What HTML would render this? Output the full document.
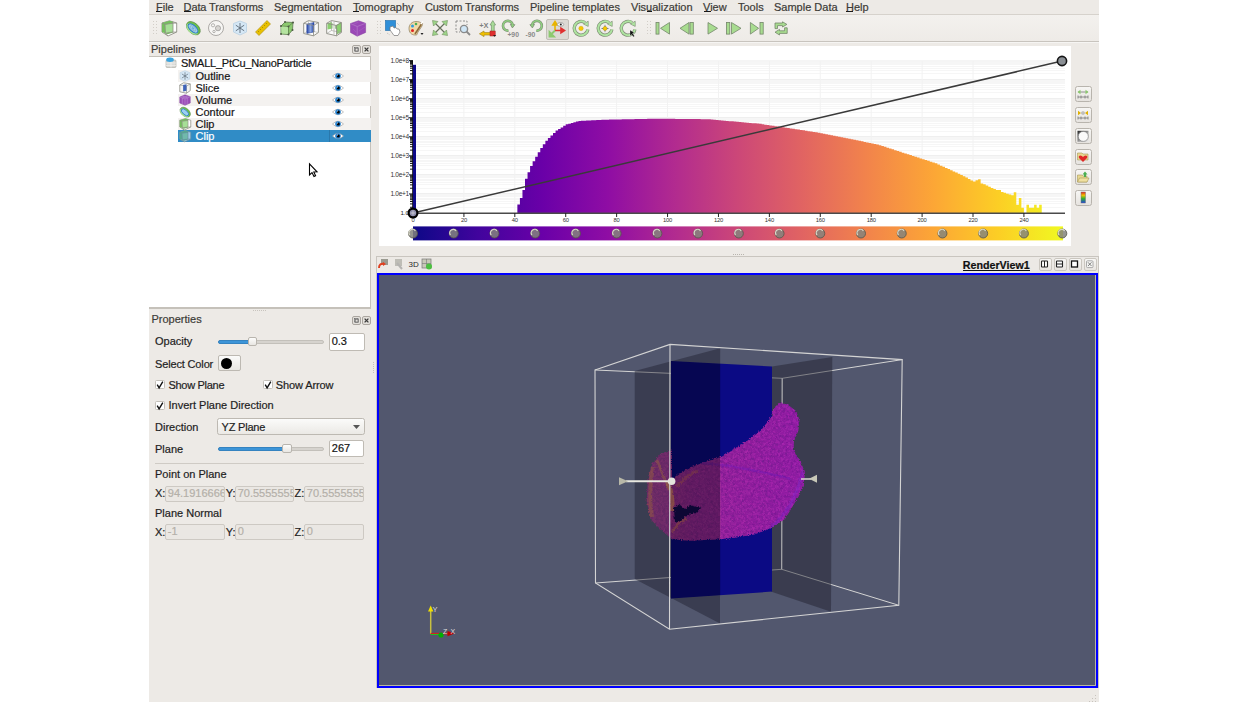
<!DOCTYPE html>
<html><head><meta charset="utf-8">
<style>
*{margin:0;padding:0;box-sizing:border-box}
html,body{width:1248px;height:702px;overflow:hidden;background:#fff;font-family:"Liberation Sans",sans-serif;font-size:11px;color:#3c3b37}
.a{position:absolute}
.t{white-space:nowrap;line-height:13px;-webkit-text-stroke:0.2px currentColor}
svg{position:absolute;overflow:visible}
</style></head>
<body>

<div class="a" style="left:149px;top:0px;width:950px;height:702px;background:#edeae6"></div>
<div class="a" style="left:149px;top:14px;width:950px;height:1px;background:#d6d2cc"></div>
<div class="a t" style="left:156px;top:0.5px;font-size:11px;color:#3c3b37">File</div>
<div class="a t" style="left:183.6px;top:0.5px;font-size:11px;color:#3c3b37;letter-spacing:-0.12px">Data Transforms</div>
<div class="a t" style="left:274px;top:0.5px;font-size:11px;color:#3c3b37">Segmentation</div>
<div class="a t" style="left:353px;top:0.5px;font-size:11px;color:#3c3b37">Tomography</div>
<div class="a t" style="left:425px;top:0.5px;font-size:11px;color:#3c3b37;letter-spacing:-0.12px">Custom Transforms</div>
<div class="a t" style="left:530px;top:0.5px;font-size:11px;color:#3c3b37">Pipeline templates</div>
<div class="a t" style="left:631px;top:0.5px;font-size:11px;color:#3c3b37">Visualization</div>
<div class="a t" style="left:703px;top:0.5px;font-size:11px;color:#3c3b37">View</div>
<div class="a t" style="left:738px;top:0.5px;font-size:11px;color:#3c3b37">Tools</div>
<div class="a t" style="left:774px;top:0.5px;font-size:11px;color:#3c3b37">Sample Data</div>
<div class="a t" style="left:846px;top:0.5px;font-size:11px;color:#3c3b37">Help</div>
<div class="a" style="left:156px;top:10.7px;width:6px;height:1.6px;background:#1a1a1a"></div>
<div class="a" style="left:184px;top:10.7px;width:7px;height:1.6px;background:#1a1a1a"></div>
<div class="a" style="left:352.6px;top:10.7px;width:6px;height:1.6px;background:#1a1a1a"></div>
<div class="a" style="left:703.5px;top:10.7px;width:7px;height:1.6px;background:#1a1a1a"></div>
<div class="a" style="left:846px;top:10.7px;width:7px;height:1.6px;background:#1a1a1a"></div>
<div class="a" style="left:646.6px;top:10.7px;width:5px;height:1.6px;background:#1a1a1a"></div>
<div class="a" style="left:149px;top:15px;width:950px;height:26px;background:linear-gradient(#f3f1ee,#eeebe7)"></div>
<div class="a" style="left:149px;top:41px;width:950px;height:1px;background:#c8c4be"></div>
<div class="a" style="left:149px;top:42px;width:950px;height:1px;background:#f6f5f3"></div>
<div class="a" style="left:153px;top:21px;width:1px;height:1px;background:#d2cec8"></div>
<div class="a" style="left:156px;top:21px;width:1px;height:1px;background:#d2cec8"></div>
<div class="a" style="left:153px;top:24px;width:1px;height:1px;background:#d2cec8"></div>
<div class="a" style="left:156px;top:24px;width:1px;height:1px;background:#d2cec8"></div>
<div class="a" style="left:153px;top:27px;width:1px;height:1px;background:#d2cec8"></div>
<div class="a" style="left:156px;top:27px;width:1px;height:1px;background:#d2cec8"></div>
<div class="a" style="left:153px;top:30px;width:1px;height:1px;background:#d2cec8"></div>
<div class="a" style="left:156px;top:30px;width:1px;height:1px;background:#d2cec8"></div>
<div class="a" style="left:153px;top:33px;width:1px;height:1px;background:#d2cec8"></div>
<div class="a" style="left:156px;top:33px;width:1px;height:1px;background:#d2cec8"></div>
<div class="a" style="left:376.5px;top:21px;width:1px;height:1px;background:#d2cec8"></div>
<div class="a" style="left:379.5px;top:21px;width:1px;height:1px;background:#d2cec8"></div>
<div class="a" style="left:376.5px;top:24px;width:1px;height:1px;background:#d2cec8"></div>
<div class="a" style="left:379.5px;top:24px;width:1px;height:1px;background:#d2cec8"></div>
<div class="a" style="left:376.5px;top:27px;width:1px;height:1px;background:#d2cec8"></div>
<div class="a" style="left:379.5px;top:27px;width:1px;height:1px;background:#d2cec8"></div>
<div class="a" style="left:376.5px;top:30px;width:1px;height:1px;background:#d2cec8"></div>
<div class="a" style="left:379.5px;top:30px;width:1px;height:1px;background:#d2cec8"></div>
<div class="a" style="left:376.5px;top:33px;width:1px;height:1px;background:#d2cec8"></div>
<div class="a" style="left:379.5px;top:33px;width:1px;height:1px;background:#d2cec8"></div>
<div class="a" style="left:647px;top:21px;width:1px;height:1px;background:#d2cec8"></div>
<div class="a" style="left:650px;top:21px;width:1px;height:1px;background:#d2cec8"></div>
<div class="a" style="left:647px;top:24px;width:1px;height:1px;background:#d2cec8"></div>
<div class="a" style="left:650px;top:24px;width:1px;height:1px;background:#d2cec8"></div>
<div class="a" style="left:647px;top:27px;width:1px;height:1px;background:#d2cec8"></div>
<div class="a" style="left:650px;top:27px;width:1px;height:1px;background:#d2cec8"></div>
<div class="a" style="left:647px;top:30px;width:1px;height:1px;background:#d2cec8"></div>
<div class="a" style="left:650px;top:30px;width:1px;height:1px;background:#d2cec8"></div>
<div class="a" style="left:647px;top:33px;width:1px;height:1px;background:#d2cec8"></div>
<div class="a" style="left:650px;top:33px;width:1px;height:1px;background:#d2cec8"></div>
<svg style="left:161.3px;top:20.0px" width="16" height="16" viewBox="0 0 16 16"><path d="M1 3 L8.5 0.8 L15.7 3 L15.7 12 L7 16 L1 12 Z" fill="#fff" stroke="#8f8f84" stroke-width="0.9"/><path d="M1 3 L8.5 0.8 L12 1.8 L12 12.5 L6.5 14.3 L1 12 Z" fill="#74bf5e"/><path d="M4 4.4 L12 3.2 L12 12 L4.5 13.2 Z" fill="#a6df96"/><path d="M1 3 L4 4.4 L12 3.2 M4 4.4 L4.5 13.2 L12 12 M12 1.8 V12.2 L15.7 12 M12 3.2 L15.7 3 M4.5 13.2 L7 16" stroke="#8f8f84" stroke-width="0.8" fill="none"/></svg>
<svg style="left:184.8px;top:20.0px" width="16" height="16" viewBox="0 0 16 16"><ellipse cx="8.3" cy="8.2" rx="5.2" ry="8" transform="rotate(-48 8.3 8.2)" fill="#6cc444" stroke="#5c8a4a" stroke-width="0.8"/><ellipse cx="7.2" cy="9" rx="4.2" ry="7" transform="rotate(-48 7.2 9)" fill="#a6e090"/><ellipse cx="8" cy="8.4" rx="3" ry="6" transform="rotate(-48 8 8.4)" fill="#9ccff4" stroke="#2c7cc0" stroke-width="1.1"/><ellipse cx="8" cy="8.4" rx="1.6" ry="3.6" transform="rotate(-48 8 8.4)" fill="none" stroke="#8aa0b0" stroke-width="0.6"/><ellipse cx="8" cy="8.4" rx="0.6" ry="1.4" transform="rotate(-48 8 8.4)" fill="#5aa0d8"/></svg>
<svg style="left:208.0px;top:20.0px" width="16" height="16" viewBox="0 0 16 16"><circle cx="8" cy="8" r="7.5" fill="#f7f6f4" stroke="#8c8a86" stroke-width="0.7"/><circle cx="5" cy="5.3" r="1.6" fill="none" stroke="#8c8a86" stroke-width="0.6"/><circle cx="10" cy="8.2" r="2.6" fill="#d7d5d2" stroke="#8c8a86" stroke-width="0.6"/><circle cx="6" cy="11.5" r="1.2" fill="none" stroke="#8c8a86" stroke-width="0.6"/></svg>
<svg style="left:231.5px;top:20.0px" width="16" height="16" viewBox="0 0 16 16"><path d="M1.5 3.5 L8 1 L14.5 3.5 L14.5 12 L8 15 L1.5 12 Z" fill="#d6e8f6" stroke="#b8cfe2" stroke-width="0.8"/><path d="M8 3 V13 M3.8 5.2 L12.2 10.8 M12.2 5.2 L3.8 10.8" stroke="#5c6a76" stroke-width="0.9"/></svg>
<svg style="left:255.0px;top:20.0px" width="16" height="16" viewBox="0 0 16 16"><path d="M0.5 12 L12 0.5 L15.5 4 L4 15.5 Z" fill="#e8c000" stroke="#a88a10" stroke-width="0.6"/><path d="M3 11 L4 12 M5 9 L6 10 M7 7 L8 8 M9 5 L10 6 M11 3 L12 4" stroke="#8a6e00" stroke-width="0.6"/></svg>
<svg style="left:278.7px;top:20.0px" width="16" height="16" viewBox="0 0 16 16"><path d="M2 6 L6 2 L14 2.5 L13.5 10 L9.5 14.5 L2 14 Z" fill="#8cc96f" stroke="#5c7a4c" stroke-width="0.8"/><path d="M2 6 L9.5 6.5 L9.5 14.5 M9.5 6.5 L14 2.5" stroke="#5c7a4c" stroke-width="0.7" fill="none"/><path d="M2 6.5 L9 7 L9 14 L2.5 13.5 Z" fill="#b5e3a0"/><g fill="#4c5a44"><circle cx="2" cy="6" r="1"/><circle cx="6" cy="2" r="1"/><circle cx="14" cy="2.5" r="1"/><circle cx="9.5" cy="6.5" r="1"/><circle cx="13.5" cy="10" r="1"/><circle cx="9.5" cy="14.5" r="1"/><circle cx="2" cy="14" r="1"/></g></svg>
<svg style="left:302.6px;top:20.0px" width="16" height="16" viewBox="0 0 16 16"><path d="M0.7 3.3 L5.5 0.6 L15.4 2.5 L15.4 12.5 L10.5 15.8 L0.7 13.5 Z" fill="#fbfbfa" stroke="#8a8a80" stroke-width="0.9"/><path d="M5.5 0.6 L5.5 10.5 L0.7 13.5 M5.5 10.5 L15.4 12.5" stroke="#b0b0a8" stroke-width="0.6" fill="none"/><defs><linearGradient id="slg" x1="0" x2="1"><stop offset="0" stop-color="#2846a8"/><stop offset="0.5" stop-color="#8aa6e0"/><stop offset="1" stop-color="#2846a8"/></linearGradient></defs><path d="M3.8 4.2 L11 2.4 L11 12 L3.8 13.4 Z" fill="url(#slg)" stroke="#1e3a90" stroke-width="0.5"/><path d="M0.7 3.3 L10.5 5.5 L15.4 2.5 M10.5 5.5 L10.5 15.8" stroke="#8a8a80" stroke-width="0.8" fill="none"/></svg>
<svg style="left:325.8px;top:20.0px" width="16" height="16" viewBox="0 0 16 16"><path d="M0.7 3.3 L5.5 0.6 L15.4 2.5 L15.4 12.5 L10.5 15.8 L0.7 13.5 Z" fill="#fbfbfa" stroke="#8a8a80" stroke-width="0.9"/><path d="M1.5 3.8 L5 2 L6.5 3.2 L6.5 8.5 L1.5 9.5 Z" fill="#8cd070"/><path d="M10.2 5.2 L15 2.8 L15 12 L11 14 L11 8.5 L9.5 8.5 L9.5 5.5 Z" fill="#8cd070" stroke="#6f8f5e" stroke-width="0.4"/><path d="M5.5 0.6 L5.5 10.5 L0.7 13.5 M5.5 10.5 L15.4 12.5 M8 2 L8 14.5" stroke="#a0a098" stroke-width="0.6" fill="none"/><path d="M0.7 3.3 L10.5 5.5 L15.4 2.5 M10.5 5.5 L10.5 15.8" stroke="#8a8a80" stroke-width="0.8" fill="none"/></svg>
<svg style="left:349.5px;top:20.0px" width="16" height="16" viewBox="0 0 16 16"><path d="M0.5 3.5 L8.5 0.7 L15.6 3.3 L15.6 12.5 L7.2 16.2 L0.5 12.5 Z" fill="#9a48b6" stroke="#80389c" stroke-width="0.5"/><path d="M0.5 3.5 L7.2 6.5 L15.6 3.3 M7.2 6.5 V16.2" stroke="#b884cc" stroke-width="0.6" fill="none"/><path d="M2 5 L8.5 2 M9 11 L15 7 M3 9 L6 12" stroke="#a868c2" stroke-width="0.5" fill="none"/></svg>
<svg style="left:384.7px;top:20.0px" width="16" height="16" viewBox="0 0 16 16"><rect x="0.5" y="0.5" width="10" height="10" fill="#2f8fd8" stroke="#1c6aa8" stroke-width="0.6"/><path d="M5 7 L8 6 L9 8 L11 7.5 L12 9 L14 9 L15 12 L13 15.5 L9 15.5 L5 10 Z" fill="#fff" stroke="#777" stroke-width="0.7"/><path d="M12 3 L15 6 M2 13 L5 15" stroke="#9a9a9a" stroke-width="0.6" stroke-dasharray="1 1"/></svg>
<svg style="left:407.8px;top:20.0px" width="16" height="16" viewBox="0 0 16 16"><path d="M8 1.5 C13 1.5 15 4 14 6 L10 12 C9 14 10 15 7 15 C3 15 1 12 1 8.5 C1 4.5 4 1.5 8 1.5 Z" fill="#f1d9a6" stroke="#8a7a5a" stroke-width="0.7"/><circle cx="4.5" cy="6" r="1.5" fill="#2f9de0"/><circle cx="8" cy="4" r="1.3" fill="#4caf50"/><circle cx="4.5" cy="10.5" r="1.5" fill="#e02020"/><path d="M7 14 L14.5 2.5" stroke="#8c6a3a" stroke-width="1.6"/><path d="M13 4 L15 1.5" stroke="#fff" stroke-width="1.6"/><path d="M12.5 13 L15.5 13 L14 15 Z" fill="#222"/></svg>
<svg style="left:431.6px;top:20.0px" width="16" height="16" viewBox="0 0 16 16"><path d="M3 3 L13 13 M13 3 L3 13" stroke="#66705c" stroke-width="1.2"/><path d="M0.5 0.5 L6 1.5 L1.5 6 Z M15.5 0.5 L10 1.5 L14.5 6 Z M0.5 15.5 L6 14.5 L1.5 10 Z M15.5 15.5 L10 14.5 L14.5 10 Z" fill="#9fd68a" stroke="#6f8f5e" stroke-width="0.6"/></svg>
<svg style="left:455.0px;top:20.0px" width="16" height="16" viewBox="0 0 16 16"><path d="M1 1 H12 V5 M1 1 V12 H5" stroke="#777" stroke-width="0.8" stroke-dasharray="2 1.5" fill="none"/><circle cx="9" cy="9" r="3.6" fill="#cfe6f6" stroke="#8a8a8a" stroke-width="1.4"/><path d="M11.5 11.5 L15 15" stroke="#8a8a8a" stroke-width="1.8"/></svg>
<svg style="left:479.7px;top:20.0px" width="16" height="16" viewBox="0 0 16 16"><text x="-0.8" y="8" font-size="7.4" font-weight="bold" font-family="Liberation Sans" fill="#808080">+X</text><path d="M11.4 12 V5 H10 L12.8 0.6 L15.6 5 H14.2 V12 Z" fill="#a8dc98" stroke="#72906a" stroke-width="0.7" stroke-linejoin="round"/><path d="M11 12.6 H4 V11 L-0.6 13.8 L4 16.6 V15 H11 Z" fill="#f0c000" stroke="#a88a20" stroke-width="0.7" stroke-linejoin="round"/><rect x="10" y="11" width="5.2" height="5" fill="#e03030" stroke="#a02020" stroke-width="0.5"/><path d="M13 15 L16.2 15 L14.6 16.8 Z" fill="#222"/></svg>
<svg style="left:502.0px;top:20.0px" width="16" height="16" viewBox="0 0 16 16"><path d="M6.4 10.6 A4.9 4.9 0 1 1 10.8 5.75" stroke="#7e8c74" stroke-width="2.6" fill="none"/><path d="M8.3 4.3 L12.9 4.7 L10.4 7.9 Z" fill="#8fd080" stroke="#7e8c74" stroke-width="0.8" stroke-linejoin="round"/><path d="M6.4 10.6 A4.9 4.9 0 1 1 10.8 5.75" stroke="#8fd080" stroke-width="1.5" fill="none"/><text x="5.4" y="16.7" font-size="6.8" font-weight="bold" font-family="Liberation Sans" fill="#8a8a8a">+90</text></svg>
<svg style="left:526.0px;top:20.0px" width="16" height="16" viewBox="0 0 16 16"><path d="M10.4 10.6 A4.9 4.9 0 1 0 6 5.75" stroke="#7e8c74" stroke-width="2.6" fill="none"/><path d="M8.5 4.3 L3.9 4.7 L6.4 7.9 Z" fill="#8fd080" stroke="#7e8c74" stroke-width="0.8" stroke-linejoin="round"/><path d="M10.4 10.6 A4.9 4.9 0 1 0 6 5.75" stroke="#8fd080" stroke-width="1.5" fill="none"/><text x="-0.5" y="16.7" font-size="6.8" font-weight="bold" font-family="Liberation Sans" fill="#8a8a8a">-90</text></svg>
<div class="a" style="left:546px;top:18.5px;width:22.5px;height:21px;background:#dcd9d4;border:1px solid #c2beb7;border-radius:2px"></div>
<svg style="left:549.3px;top:21.0px" width="16" height="16" viewBox="0 0 16 16"><path d="M6 9 V1.5 M3.8 4 L6 0.5 L8.2 4 Z" stroke="#e8b400" stroke-width="1.6" fill="#f0c000"/><path d="M6 9.5 H13.5 M12 7.3 L15.5 9.5 L12 11.7 Z" stroke="#e03030" stroke-width="1.6" fill="#e03030"/><path d="M6 9.5 L1 14.5 M0.5 11 L0.5 15.5 L5 15.5 Z" stroke="#8cc96f" stroke-width="1.8" fill="#9fd68a"/><ellipse cx="11.5" cy="3.5" rx="3.2" ry="1.8" fill="#fff" stroke="#666" stroke-width="0.5"/><circle cx="11.8" cy="3.5" r="1" fill="#222"/></svg>
<svg style="left:573.0px;top:20.0px" width="16" height="16" viewBox="0 0 16 16"><path d="M12 2.6 A6.9 6.9 0 1 0 14.9 9.4" stroke="#7e8c74" stroke-width="3.3" fill="none"/><path d="M10.6 4.1 L15.2 1.2 L15.2 6.4 Z" fill="#aee4a0" stroke="#7e8c74" stroke-width="0.7" stroke-linejoin="round"/><path d="M12 2.6 A6.9 6.9 0 1 0 14.9 9.4" stroke="#aee4a0" stroke-width="2" fill="none"/><path d="M11.5 4 L14.6 2.2 L14.6 5.4 Z" fill="#aee4a0"/><circle cx="8" cy="8.4" r="2.2" fill="#f8c800" stroke="#c09a00" stroke-width="0.4"/></svg>
<svg style="left:596.7px;top:20.0px" width="16" height="16" viewBox="0 0 16 16"><path d="M12 2.6 A6.9 6.9 0 1 0 14.9 9.4" stroke="#7e8c74" stroke-width="3.3" fill="none"/><path d="M10.6 4.1 L15.2 1.2 L15.2 6.4 Z" fill="#aee4a0" stroke="#7e8c74" stroke-width="0.7" stroke-linejoin="round"/><path d="M12 2.6 A6.9 6.9 0 1 0 14.9 9.4" stroke="#aee4a0" stroke-width="2" fill="none"/><path d="M11.5 4 L14.6 2.2 L14.6 5.4 Z" fill="#aee4a0"/><path d="M8 4.2 L9 7.4 L12.2 8.4 L9 9.4 L8 12.6 L7 9.4 L3.8 8.4 L7 7.4 Z" fill="#6a7a88"/><circle cx="8" cy="8.4" r="2" fill="#f8c800" stroke="#c09a00" stroke-width="0.4"/></svg>
<svg style="left:620.4px;top:20.0px" width="16" height="16" viewBox="0 0 16 16"><path d="M12 2.6 A6.9 6.9 0 1 0 14.9 9.4" stroke="#7e8c74" stroke-width="3.3" fill="none"/><path d="M10.6 4.1 L15.2 1.2 L15.2 6.4 Z" fill="#aee4a0" stroke="#7e8c74" stroke-width="0.7" stroke-linejoin="round"/><path d="M12 2.6 A6.9 6.9 0 1 0 14.9 9.4" stroke="#aee4a0" stroke-width="2" fill="none"/><path d="M11.5 4 L14.6 2.2 L14.6 5.4 Z" fill="#aee4a0"/><path d="M10 10 L10 16 L11.5 14.5 L13.5 17 L14.5 16 L12.5 13.5 L14.5 13 Z" fill="#111" stroke="#fff" stroke-width="0.3"/></svg>
<svg style="left:655.4px;top:21.3px" width="16" height="16" viewBox="0 0 16 16"><rect x="1" y="1.5" width="3" height="11.6" fill="#a8dc90" stroke="#74866a" stroke-width="0.8"/><path d="M5.5 7.3 L14.5 1.5 L14.5 13.1 Z" fill="#a8dc90" stroke="#74866a" stroke-width="0.8"/></svg>
<svg style="left:678.8px;top:21.3px" width="16" height="16" viewBox="0 0 16 16"><path d="M1 7.3 L10 1.5 L10 13.1 Z" fill="#a8dc90" stroke="#74866a" stroke-width="0.8"/><rect x="11" y="1.5" width="3.3" height="11.6" fill="#a8dc90" stroke="#74866a" stroke-width="0.8"/></svg>
<svg style="left:703.5px;top:21.3px" width="16" height="16" viewBox="0 0 16 16"><path d="M4 1.5 L13.5 7.3 L4 13.1 Z" fill="#a8dc90" stroke="#74866a" stroke-width="0.8"/></svg>
<svg style="left:726.3px;top:21.3px" width="16" height="16" viewBox="0 0 16 16"><rect x="0.5" y="1.5" width="3.3" height="11.6" fill="#a8dc90" stroke="#74866a" stroke-width="0.8"/><path d="M5.5 1.5 L15 7.3 L5.5 13.1 Z" fill="#a8dc90" stroke="#74866a" stroke-width="0.8"/></svg>
<svg style="left:749.2px;top:21.3px" width="16" height="16" viewBox="0 0 16 16"><path d="M1.4 1.5 L9.6 7.3 L1.4 13.1 Z" fill="#a8dc90" stroke="#74866a" stroke-width="0.8"/><rect x="11" y="1.5" width="3.2" height="11.6" fill="#a8dc90" stroke="#74866a" stroke-width="0.8"/></svg>
<svg style="left:773.0px;top:20.0px" width="16" height="16" viewBox="0 0 16 16"><path d="M2 3 L9.5 3 L9.5 1.8 L13.9 4.4 L9.5 7 L9.5 5.6 L4.5 5.6 L4.5 8.6 L2 8.6 Z" fill="#a8dc90" stroke="#74866a" stroke-width="0.8" stroke-linejoin="round"/><path d="M14.2 7.8 L14.2 13.4 L6.5 13.4 L6.5 15 L2 12.2 L6.5 9.4 L6.5 10.8 L11.6 10.8 L11.6 7.8 Z" fill="#a8dc90" stroke="#74866a" stroke-width="0.8" stroke-linejoin="round"/></svg>
<div class="a t" style="left:151px;top:42.5px;font-size:11px;color:#3c3b37">Pipelines</div>
<svg style="left:351.5px;top:45px" width="20" height="9" viewBox="0 0 20 9"><rect x="0.5" y="0.5" width="8" height="8" rx="1.5" fill="#e4e1dc" stroke="#9a968f" stroke-width="0.8"/><rect x="2.5" y="2.5" width="3.5" height="3.5" fill="none" stroke="#6a6a6a" stroke-width="0.7"/><rect x="3.5" y="3.5" width="3" height="3" fill="none" stroke="#6a6a6a" stroke-width="0.6"/><rect x="10.5" y="0.5" width="8" height="8" rx="1.5" fill="#e4e1dc" stroke="#9a968f" stroke-width="0.8"/><path d="M12.6 2.6 L16.4 6.4 M16.4 2.6 L12.6 6.4" stroke="#3a3a3a" stroke-width="1.3"/></svg>
<div class="a" style="left:149px;top:56px;width:222px;height:252px;background:#fff;border:1px solid #c5c1ba;border-left:none"></div>
<div class="a" style="left:177.5px;top:69.7px;width:193px;height:12px;background:#f4f2f0"></div>
<div class="a t" style="left:195.5px;top:69.8px;font-size:11px;color:#141414">Outline</div>
<div class="a t" style="left:195.5px;top:81.85px;font-size:11px;color:#141414">Slice</div>
<div class="a" style="left:177.5px;top:93.80000000000001px;width:193px;height:12px;background:#f4f2f0"></div>
<div class="a t" style="left:195.5px;top:93.9px;font-size:11px;color:#141414">Volume</div>
<div class="a t" style="left:195.5px;top:105.95px;font-size:11px;color:#141414">Contour</div>
<div class="a" style="left:177.5px;top:117.9px;width:193px;height:12px;background:#f4f2f0"></div>
<div class="a t" style="left:195.5px;top:118.0px;font-size:11px;color:#141414">Clip</div>
<div class="a" style="left:177.5px;top:129.95px;width:193px;height:12px;background:#308cc6"></div>
<div class="a" style="left:329px;top:129.95px;width:1px;height:12px;background:#2a78ac"></div>
<div class="a t" style="left:195.5px;top:130.04999999999998px;font-size:11px;color:#fff">Clip</div>
<div class="a t" style="left:181px;top:57.4px;font-size:11px;color:#141414;letter-spacing:-0.23px">SMALL_PtCu_NanoParticle</div>
<svg style="left:165px;top:57px" width="12" height="11" viewBox="0 0 12 11"><rect x="1" y="3" width="10" height="7.5" rx="1" fill="#d8d8d4" stroke="#a8a8a0" stroke-width="0.6"/><path d="M1 6 H11 M1 8.3 H11 M6 3 V10.5" stroke="#f4f4f2" stroke-width="0.8"/><ellipse cx="5" cy="2.8" rx="3.8" ry="2.2" fill="#3aa4e0"/></svg>
<svg style="left:179px;top:69.7px" width="12" height="12" viewBox="0 0 16 16"><path d="M1.5 3.5 L8 1 L14.5 3.5 L14.5 12 L8 15 L1.5 12 Z" fill="#d6e8f6" stroke="#b8cfe2" stroke-width="0.8"/><path d="M8 3 V13 M3.8 5.2 L12.2 10.8 M12.2 5.2 L3.8 10.8" stroke="#5c6a76" stroke-width="0.9"/></svg>
<svg style="left:179px;top:81.7px" width="12" height="12" viewBox="0 0 16 16"><path d="M1 4 L6 1 L15 2.5 L15 11.5 L10 15 L1 13 Z" fill="#f4f4f2" stroke="#8a8a80" stroke-width="1"/><path d="M1 4 L10 5.5 L15 2.5 M10 5.5 L10 15" stroke="#8a8a80" stroke-width="0.8" fill="none"/><path d="M5.5 4 L10 3 L10 11.5 L5.5 12.8 Z" fill="#3f63b8"/></svg>
<svg style="left:179px;top:93.8px" width="12" height="12" viewBox="0 0 16 16"><path d="M1 4 L8 1 L15 3.5 L15 12 L8 15 L1 12 Z" fill="#9b4fb8" stroke="#7a3a98" stroke-width="0.6"/><path d="M1 4 L8 6.5 L15 3.5 M8 6.5 V15 M4 2.7 L11 5 L11 13.5 M12 2.3 L4.5 5.3 L4.5 13.5" stroke="#c08ed6" stroke-width="0.7" fill="none"/></svg>
<svg style="left:179px;top:105.9px" width="12" height="12" viewBox="0 0 16 16"><ellipse cx="8.3" cy="8.2" rx="5.2" ry="8" transform="rotate(-48 8.3 8.2)" fill="#6cc444" stroke="#5c8a4a" stroke-width="0.8"/><ellipse cx="7.2" cy="9" rx="4.2" ry="7" transform="rotate(-48 7.2 9)" fill="#a6e090"/><ellipse cx="8" cy="8.4" rx="3" ry="6" transform="rotate(-48 8 8.4)" fill="#9ccff4" stroke="#2c7cc0" stroke-width="1.1"/></svg>
<svg style="left:179px;top:118px" width="12" height="12" viewBox="0 0 16 16"><g opacity="1"><path d="M1 3 L8.5 0.8 L15.7 3 L15.7 12 L7 16 L1 12 Z" fill="#fff" stroke="#8f8f84" stroke-width="1"/><path d="M1 3 L8.5 0.8 L12 1.8 L12 12.5 L6.5 14.3 L1 12 Z" fill="#74bf5e"/><path d="M4 4.4 L12 3.2 L12 12 L4.5 13.2 Z" fill="#a6df96"/><path d="M1 3 L4 4.4 L12 3.2 M4 4.4 L4.5 13.2 L12 12 M12 1.8 V12.2 L15.7 12 M4.5 13.2 L7 16" stroke="#8f8f84" stroke-width="0.9" fill="none"/></g></svg>
<svg style="left:179px;top:130px" width="12" height="12" viewBox="0 0 16 16"><g opacity="0.55"><path d="M1 3 L8.5 0.8 L15.7 3 L15.7 12 L7 16 L1 12 Z" fill="#fff" stroke="#8f8f84" stroke-width="1"/><path d="M1 3 L8.5 0.8 L12 1.8 L12 12.5 L6.5 14.3 L1 12 Z" fill="#74bf5e"/><path d="M4 4.4 L12 3.2 L12 12 L4.5 13.2 Z" fill="#a6df96"/><path d="M1 3 L4 4.4 L12 3.2 M4 4.4 L4.5 13.2 L12 12 M12 1.8 V12.2 L15.7 12 M4.5 13.2 L7 16" stroke="#8f8f84" stroke-width="0.9" fill="none"/></g></svg>
<svg style="left:331.5px;top:71.7px" width="12" height="8" viewBox="0 0 12 8"><path d="M0.5 4 Q6 -1.5 11.5 4 Q6 9.5 0.5 4 Z" fill="#fff" stroke="#9a9a9a" stroke-width="0.6"/><circle cx="6" cy="4" r="2.8" fill="#1f7fd0"/><circle cx="6.3" cy="4" r="1.5" fill="#000"/><circle cx="5.3" cy="3" r="0.6" fill="#fff"/></svg>
<svg style="left:331.5px;top:83.75px" width="12" height="8" viewBox="0 0 12 8"><path d="M0.5 4 Q6 -1.5 11.5 4 Q6 9.5 0.5 4 Z" fill="#fff" stroke="#9a9a9a" stroke-width="0.6"/><circle cx="6" cy="4" r="2.8" fill="#1f7fd0"/><circle cx="6.3" cy="4" r="1.5" fill="#000"/><circle cx="5.3" cy="3" r="0.6" fill="#fff"/></svg>
<svg style="left:331.5px;top:95.80000000000001px" width="12" height="8" viewBox="0 0 12 8"><path d="M0.5 4 Q6 -1.5 11.5 4 Q6 9.5 0.5 4 Z" fill="#fff" stroke="#9a9a9a" stroke-width="0.6"/><circle cx="6" cy="4" r="2.8" fill="#1f7fd0"/><circle cx="6.3" cy="4" r="1.5" fill="#000"/><circle cx="5.3" cy="3" r="0.6" fill="#fff"/></svg>
<svg style="left:331.5px;top:107.85000000000001px" width="12" height="8" viewBox="0 0 12 8"><path d="M0.5 4 Q6 -1.5 11.5 4 Q6 9.5 0.5 4 Z" fill="#fff" stroke="#9a9a9a" stroke-width="0.6"/><circle cx="6" cy="4" r="2.8" fill="#1f7fd0"/><circle cx="6.3" cy="4" r="1.5" fill="#000"/><circle cx="5.3" cy="3" r="0.6" fill="#fff"/></svg>
<svg style="left:331.5px;top:119.9px" width="12" height="8" viewBox="0 0 12 8"><path d="M0.5 4 Q6 -1.5 11.5 4 Q6 9.5 0.5 4 Z" fill="#fff" stroke="#9a9a9a" stroke-width="0.6"/><circle cx="6" cy="4" r="2.8" fill="#1f7fd0"/><circle cx="6.3" cy="4" r="1.5" fill="#000"/><circle cx="5.3" cy="3" r="0.6" fill="#fff"/></svg>
<svg style="left:331.5px;top:131.95px" width="12" height="8" viewBox="0 0 12 8"><path d="M0.5 4 Q6 -1.5 11.5 4 Q6 9.5 0.5 4 Z" fill="#fff" stroke="#9a9a9a" stroke-width="0.6"/><circle cx="6" cy="4" r="2.8" fill="#1f7fd0"/><circle cx="6.3" cy="4" r="1.5" fill="#000"/><circle cx="5.3" cy="3" r="0.6" fill="#fff"/></svg>
<div class="a" style="left:149px;top:308px;width:222px;height:1px;background:#c5c1ba"></div>
<div class="a" style="left:253px;top:310px;width:1px;height:1px;background:#c8c4be"></div>
<div class="a" style="left:255px;top:310px;width:1px;height:1px;background:#c8c4be"></div>
<div class="a" style="left:257px;top:310px;width:1px;height:1px;background:#c8c4be"></div>
<div class="a" style="left:259px;top:310px;width:1px;height:1px;background:#c8c4be"></div>
<div class="a" style="left:261px;top:310px;width:1px;height:1px;background:#c8c4be"></div>
<div class="a" style="left:263px;top:310px;width:1px;height:1px;background:#c8c4be"></div>
<div class="a" style="left:265px;top:310px;width:1px;height:1px;background:#c8c4be"></div>
<div class="a t" style="left:151.5px;top:313.2px;font-size:11px;color:#3c3b37">Properties</div>
<svg style="left:351.5px;top:315.5px" width="20" height="9" viewBox="0 0 20 9"><rect x="0.5" y="0.5" width="8" height="8" rx="1.5" fill="#e4e1dc" stroke="#9a968f" stroke-width="0.8"/><rect x="2.5" y="2.5" width="3.5" height="3.5" fill="none" stroke="#6a6a6a" stroke-width="0.7"/><rect x="3.5" y="3.5" width="3" height="3" fill="none" stroke="#6a6a6a" stroke-width="0.6"/><rect x="10.5" y="0.5" width="8" height="8" rx="1.5" fill="#e4e1dc" stroke="#9a968f" stroke-width="0.8"/><path d="M12.6 2.6 L16.4 6.4 M16.4 2.6 L12.6 6.4" stroke="#3a3a3a" stroke-width="1.3"/></svg>
<div class="a t" style="left:155px;top:335.3px;color:#1e1e1e">Opacity</div>
<div class="a" style="left:218px;top:339.7px;width:105.80000000000001px;height:4px;background:#d6d3ce;border-radius:2px;border:1px solid #c3c0ba"></div>
<div class="a" style="left:218px;top:339.7px;width:32.80000000000001px;height:4px;background:#3d95d8;border-radius:2px;border:1px solid #3583c0"></div>
<div class="a" style="left:247.8px;top:337.2px;width:9.0px;height:9px;background:linear-gradient(#fdfdfc,#e8e6e2);border:1px solid #b9b5ae;border-radius:2px"></div>
<div class="a" style="left:329.2px;top:333.2px;width:35.400000000000034px;height:17.400000000000034px;background:#fff;border:1px solid #bfbbb4;border-radius:2px;overflow:hidden"><div class="a t" style="left:1.5px;top:0.9000000000000172px;color:#141414">0.3</div></div>
<div class="a t" style="left:155px;top:358.2px;color:#1e1e1e;letter-spacing:-0.15px">Select Color</div>
<div class="a" style="left:217.6px;top:355.3px;width:23.6px;height:16px;background:linear-gradient(#fbfbfa,#e9e7e3);border:1px solid #bdb9b2;border-radius:2px"></div>
<div class="a" style="left:221.4px;top:358.3px;width:11px;height:11px;border-radius:50%;background:#000"></div>
<div class="a" style="left:154.7px;top:379.8px;width:10px;height:9.5px;background:#fff;border:1px solid #c3bfb8;border-radius:1.5px"></div>
<svg style="left:154.7px;top:379.8px" width="10" height="10" viewBox="0 0 10 10"><path d="M2.2 4.6 L4.1 7.8 L7.8 1.6" stroke="#111" stroke-width="1.4" fill="none"/></svg>
<div class="a t" style="left:168.5px;top:378.5px;color:#1e1e1e;letter-spacing:-0.3px">Show Plane</div>
<div class="a" style="left:262.5px;top:379.8px;width:10px;height:9.5px;background:#fff;border:1px solid #c3bfb8;border-radius:1.5px"></div>
<svg style="left:262.5px;top:379.8px" width="10" height="10" viewBox="0 0 10 10"><path d="M2.2 4.6 L4.1 7.8 L7.8 1.6" stroke="#111" stroke-width="1.4" fill="none"/></svg>
<div class="a t" style="left:275.7px;top:378.5px;color:#1e1e1e;letter-spacing:-0.1px">Show Arrow</div>
<div class="a" style="left:154.6px;top:400.7px;width:10px;height:9.5px;background:#fff;border:1px solid #c3bfb8;border-radius:1.5px"></div>
<svg style="left:154.6px;top:400.7px" width="10" height="10" viewBox="0 0 10 10"><path d="M2.2 4.6 L4.1 7.8 L7.8 1.6" stroke="#111" stroke-width="1.4" fill="none"/></svg>
<div class="a t" style="left:168.5px;top:399.2px;color:#1e1e1e">Invert Plane Direction</div>
<div class="a t" style="left:155px;top:420.7px;color:#1e1e1e">Direction</div>
<div class="a" style="left:217.2px;top:417.6px;width:147.6px;height:17.8px;background:linear-gradient(#fbfbfa,#ebe9e5);border:1px solid #bdb9b2;border-radius:2.5px"></div>
<div class="a t" style="left:221.5px;top:420.7px;color:#1e1e1e;letter-spacing:-0.2px">YZ Plane</div>
<svg style="left:353px;top:425px" width="7" height="4" viewBox="0 0 7 4"><path d="M0 0 H7 L3.5 4 Z" fill="#555"/></svg>
<div class="a t" style="left:155px;top:442.6px;color:#1e1e1e">Plane</div>
<div class="a" style="left:218px;top:446.9px;width:105.5px;height:4px;background:#d6d3ce;border-radius:2px;border:1px solid #c3c0ba"></div>
<div class="a" style="left:218px;top:446.9px;width:66.80000000000001px;height:4px;background:#3d95d8;border-radius:2px;border:1px solid #3583c0"></div>
<div class="a" style="left:281.8px;top:444.4px;width:10.199999999999989px;height:9px;background:linear-gradient(#fdfdfc,#e8e6e2);border:1px solid #b9b5ae;border-radius:2px"></div>
<div class="a" style="left:329.3px;top:440.3px;width:34.80000000000001px;height:17.099999999999966px;background:#fff;border:1px solid #bfbbb4;border-radius:2px;overflow:hidden"><div class="a t" style="left:1.5px;top:0.7499999999999831px;color:#141414">267</div></div>
<div class="a" style="left:155px;top:462.5px;width:209px;height:1px;background:#cfcbc5"></div>
<div class="a t" style="left:155px;top:467.8px;color:#1e1e1e">Point on Plane</div>
<div class="a t" style="left:155px;top:487.3px;color:#1e1e1e">X:</div>
<div class="a" style="left:165.3px;top:485.8px;width:59.89999999999998px;height:16.099999999999966px;background:#eae7e3;border:1px solid #cdc9c3;border-radius:2px;overflow:hidden"><div class="a t" style="left:1.5px;top:0.24999999999998312px;color:#b4b0a9">94.1916666</div></div>
<div class="a t" style="left:225.8px;top:487.3px;color:#1e1e1e">Y:</div>
<div class="a" style="left:235.2px;top:485.8px;width:59.0px;height:16.099999999999966px;background:#eae7e3;border:1px solid #cdc9c3;border-radius:2px;overflow:hidden"><div class="a t" style="left:1.5px;top:0.24999999999998312px;color:#b4b0a9">70.5555555</div></div>
<div class="a t" style="left:294.6px;top:487.3px;color:#1e1e1e">Z:</div>
<div class="a" style="left:304.3px;top:485.8px;width:59.80000000000001px;height:16.099999999999966px;background:#eae7e3;border:1px solid #cdc9c3;border-radius:2px;overflow:hidden"><div class="a t" style="left:1.5px;top:0.24999999999998312px;color:#b4b0a9">70.5555555</div></div>
<div class="a t" style="left:155px;top:506.6px;color:#1e1e1e">Plane Normal</div>
<div class="a t" style="left:155px;top:525.6px;color:#1e1e1e">X:</div>
<div class="a" style="left:165.3px;top:523.7px;width:59.89999999999998px;height:16.699999999999932px;background:#eae7e3;border:1px solid #cdc9c3;border-radius:2px;overflow:hidden"><div class="a t" style="left:1.5px;top:0.5499999999999661px;color:#b4b0a9">-1</div></div>
<div class="a t" style="left:225.8px;top:525.6px;color:#1e1e1e">Y:</div>
<div class="a" style="left:235.2px;top:523.7px;width:59.0px;height:16.699999999999932px;background:#eae7e3;border:1px solid #cdc9c3;border-radius:2px;overflow:hidden"><div class="a t" style="left:1.5px;top:0.5499999999999661px;color:#b4b0a9">0</div></div>
<div class="a t" style="left:294.6px;top:525.6px;color:#1e1e1e">Z:</div>
<div class="a" style="left:304.3px;top:523.7px;width:59.80000000000001px;height:16.699999999999932px;background:#eae7e3;border:1px solid #cdc9c3;border-radius:2px;overflow:hidden"><div class="a t" style="left:1.5px;top:0.5499999999999661px;color:#b4b0a9">0</div></div>
<div class="a" style="left:379px;top:46px;width:691.5px;height:200px;background:#fff"></div>
<svg style="left:0;top:0" width="1248" height="702" viewBox="0 0 1248 702"><defs><linearGradient id="plasma" gradientUnits="userSpaceOnUse" x1="413" y1="0" x2="1063" y2="0"><stop offset="0.0" stop-color="#0d0887"/><stop offset="0.1" stop-color="#41049d"/><stop offset="0.2" stop-color="#6a00a8"/><stop offset="0.3" stop-color="#8f0da4"/><stop offset="0.4" stop-color="#b12a90"/><stop offset="0.5" stop-color="#cc4778"/><stop offset="0.6" stop-color="#e16462"/><stop offset="0.7" stop-color="#f2844b"/><stop offset="0.8" stop-color="#fca636"/><stop offset="0.9" stop-color="#fcce25"/><stop offset="1.0" stop-color="#f0f921"/></linearGradient><radialGradient id="ball" cx="0.4" cy="0.35" r="0.7"><stop offset="0" stop-color="#c9c9c9"/><stop offset="0.6" stop-color="#8c8c8c"/><stop offset="1" stop-color="#666"/></radialGradient></defs><line x1="415" x2="1065" y1="207.50" y2="207.50" stroke="#f6f6f6" stroke-width="1"/><line x1="415" x2="1065" y1="203.50" y2="203.50" stroke="#f6f6f6" stroke-width="1"/><line x1="415" x2="1065" y1="201.50" y2="201.50" stroke="#f6f6f6" stroke-width="1"/><line x1="415" x2="1065" y1="199.50" y2="199.50" stroke="#f6f6f6" stroke-width="1"/><line x1="415" x2="1065" y1="198.50" y2="198.50" stroke="#f6f6f6" stroke-width="1"/><line x1="415" x2="1065" y1="196.50" y2="196.50" stroke="#f6f6f6" stroke-width="1"/><line x1="415" x2="1065" y1="195.50" y2="195.50" stroke="#f6f6f6" stroke-width="1"/><line x1="415" x2="1065" y1="194.50" y2="194.50" stroke="#f6f6f6" stroke-width="1"/><line x1="415" x2="1065" y1="193.50" y2="193.50" stroke="#efefef" stroke-width="1"/><line x1="415" x2="1065" y1="188.50" y2="188.50" stroke="#f6f6f6" stroke-width="1"/><line x1="415" x2="1065" y1="184.50" y2="184.50" stroke="#f6f6f6" stroke-width="1"/><line x1="415" x2="1065" y1="182.50" y2="182.50" stroke="#f6f6f6" stroke-width="1"/><line x1="415" x2="1065" y1="180.50" y2="180.50" stroke="#f6f6f6" stroke-width="1"/><line x1="415" x2="1065" y1="179.50" y2="179.50" stroke="#f6f6f6" stroke-width="1"/><line x1="415" x2="1065" y1="177.50" y2="177.50" stroke="#f6f6f6" stroke-width="1"/><line x1="415" x2="1065" y1="176.50" y2="176.50" stroke="#f6f6f6" stroke-width="1"/><line x1="415" x2="1065" y1="175.50" y2="175.50" stroke="#f6f6f6" stroke-width="1"/><line x1="415" x2="1065" y1="174.50" y2="174.50" stroke="#efefef" stroke-width="1"/><line x1="415" x2="1065" y1="169.50" y2="169.50" stroke="#f6f6f6" stroke-width="1"/><line x1="415" x2="1065" y1="165.50" y2="165.50" stroke="#f6f6f6" stroke-width="1"/><line x1="415" x2="1065" y1="163.50" y2="163.50" stroke="#f6f6f6" stroke-width="1"/><line x1="415" x2="1065" y1="161.50" y2="161.50" stroke="#f6f6f6" stroke-width="1"/><line x1="415" x2="1065" y1="160.50" y2="160.50" stroke="#f6f6f6" stroke-width="1"/><line x1="415" x2="1065" y1="158.50" y2="158.50" stroke="#f6f6f6" stroke-width="1"/><line x1="415" x2="1065" y1="157.50" y2="157.50" stroke="#f6f6f6" stroke-width="1"/><line x1="415" x2="1065" y1="156.50" y2="156.50" stroke="#f6f6f6" stroke-width="1"/><line x1="415" x2="1065" y1="155.50" y2="155.50" stroke="#efefef" stroke-width="1"/><line x1="415" x2="1065" y1="150.50" y2="150.50" stroke="#f6f6f6" stroke-width="1"/><line x1="415" x2="1065" y1="146.50" y2="146.50" stroke="#f6f6f6" stroke-width="1"/><line x1="415" x2="1065" y1="144.50" y2="144.50" stroke="#f6f6f6" stroke-width="1"/><line x1="415" x2="1065" y1="142.50" y2="142.50" stroke="#f6f6f6" stroke-width="1"/><line x1="415" x2="1065" y1="141.50" y2="141.50" stroke="#f6f6f6" stroke-width="1"/><line x1="415" x2="1065" y1="139.50" y2="139.50" stroke="#f6f6f6" stroke-width="1"/><line x1="415" x2="1065" y1="138.50" y2="138.50" stroke="#f6f6f6" stroke-width="1"/><line x1="415" x2="1065" y1="137.50" y2="137.50" stroke="#f6f6f6" stroke-width="1"/><line x1="415" x2="1065" y1="136.50" y2="136.50" stroke="#efefef" stroke-width="1"/><line x1="415" x2="1065" y1="131.50" y2="131.50" stroke="#f6f6f6" stroke-width="1"/><line x1="415" x2="1065" y1="127.50" y2="127.50" stroke="#f6f6f6" stroke-width="1"/><line x1="415" x2="1065" y1="125.50" y2="125.50" stroke="#f6f6f6" stroke-width="1"/><line x1="415" x2="1065" y1="123.50" y2="123.50" stroke="#f6f6f6" stroke-width="1"/><line x1="415" x2="1065" y1="121.50" y2="121.50" stroke="#f6f6f6" stroke-width="1"/><line x1="415" x2="1065" y1="120.50" y2="120.50" stroke="#f6f6f6" stroke-width="1"/><line x1="415" x2="1065" y1="119.50" y2="119.50" stroke="#f6f6f6" stroke-width="1"/><line x1="415" x2="1065" y1="118.50" y2="118.50" stroke="#f6f6f6" stroke-width="1"/><line x1="415" x2="1065" y1="117.50" y2="117.50" stroke="#efefef" stroke-width="1"/><line x1="415" x2="1065" y1="112.50" y2="112.50" stroke="#f6f6f6" stroke-width="1"/><line x1="415" x2="1065" y1="108.50" y2="108.50" stroke="#f6f6f6" stroke-width="1"/><line x1="415" x2="1065" y1="106.50" y2="106.50" stroke="#f6f6f6" stroke-width="1"/><line x1="415" x2="1065" y1="104.50" y2="104.50" stroke="#f6f6f6" stroke-width="1"/><line x1="415" x2="1065" y1="102.50" y2="102.50" stroke="#f6f6f6" stroke-width="1"/><line x1="415" x2="1065" y1="101.50" y2="101.50" stroke="#f6f6f6" stroke-width="1"/><line x1="415" x2="1065" y1="100.50" y2="100.50" stroke="#f6f6f6" stroke-width="1"/><line x1="415" x2="1065" y1="99.50" y2="99.50" stroke="#f6f6f6" stroke-width="1"/><line x1="415" x2="1065" y1="98.50" y2="98.50" stroke="#efefef" stroke-width="1"/><line x1="415" x2="1065" y1="92.50" y2="92.50" stroke="#f6f6f6" stroke-width="1"/><line x1="415" x2="1065" y1="89.50" y2="89.50" stroke="#f6f6f6" stroke-width="1"/><line x1="415" x2="1065" y1="87.50" y2="87.50" stroke="#f6f6f6" stroke-width="1"/><line x1="415" x2="1065" y1="85.50" y2="85.50" stroke="#f6f6f6" stroke-width="1"/><line x1="415" x2="1065" y1="83.50" y2="83.50" stroke="#f6f6f6" stroke-width="1"/><line x1="415" x2="1065" y1="82.50" y2="82.50" stroke="#f6f6f6" stroke-width="1"/><line x1="415" x2="1065" y1="81.50" y2="81.50" stroke="#f6f6f6" stroke-width="1"/><line x1="415" x2="1065" y1="80.50" y2="80.50" stroke="#f6f6f6" stroke-width="1"/><line x1="415" x2="1065" y1="79.50" y2="79.50" stroke="#efefef" stroke-width="1"/><line x1="415" x2="1065" y1="73.50" y2="73.50" stroke="#f6f6f6" stroke-width="1"/><line x1="415" x2="1065" y1="70.50" y2="70.50" stroke="#f6f6f6" stroke-width="1"/><line x1="415" x2="1065" y1="68.50" y2="68.50" stroke="#f6f6f6" stroke-width="1"/><line x1="415" x2="1065" y1="66.50" y2="66.50" stroke="#f6f6f6" stroke-width="1"/><line x1="415" x2="1065" y1="64.50" y2="64.50" stroke="#f6f6f6" stroke-width="1"/><line x1="415" x2="1065" y1="63.50" y2="63.50" stroke="#f6f6f6" stroke-width="1"/><line x1="415" x2="1065" y1="62.50" y2="62.50" stroke="#f6f6f6" stroke-width="1"/><line x1="415" x2="1065" y1="61.50" y2="61.50" stroke="#f6f6f6" stroke-width="1"/><line x1="415" x2="1065" y1="60.60" y2="60.60" stroke="#f4f4f4" stroke-width="1"/><line x1="463.91" x2="463.91" y1="61" y2="213" stroke="#f2f2f2" stroke-width="1"/><line x1="514.82" x2="514.82" y1="61" y2="213" stroke="#f2f2f2" stroke-width="1"/><line x1="565.73" x2="565.73" y1="61" y2="213" stroke="#f2f2f2" stroke-width="1"/><line x1="616.64" x2="616.64" y1="61" y2="213" stroke="#f2f2f2" stroke-width="1"/><line x1="667.55" x2="667.55" y1="61" y2="213" stroke="#f2f2f2" stroke-width="1"/><line x1="718.46" x2="718.46" y1="61" y2="213" stroke="#f2f2f2" stroke-width="1"/><line x1="769.37" x2="769.37" y1="61" y2="213" stroke="#f2f2f2" stroke-width="1"/><line x1="820.28" x2="820.28" y1="61" y2="213" stroke="#f2f2f2" stroke-width="1"/><line x1="871.19" x2="871.19" y1="61" y2="213" stroke="#f2f2f2" stroke-width="1"/><line x1="922.10" x2="922.10" y1="61" y2="213" stroke="#f2f2f2" stroke-width="1"/><line x1="973.01" x2="973.01" y1="61" y2="213" stroke="#f2f2f2" stroke-width="1"/><line x1="1023.92" x2="1023.92" y1="61" y2="213" stroke="#f2f2f2" stroke-width="1"/><path d="M517.37,213.0 L517.37,204.60 519.91,204.60 L519.91,198.00 522.46,198.00 L522.46,190.00 525.00,190.00 L525.00,178.81 527.55,178.81 L527.55,172.21 530.09,172.21 L530.09,165.97 532.64,165.97 L532.64,161.33 535.18,161.33 L535.18,156.72 537.73,156.72 L537.73,152.23 540.27,152.23 L540.27,147.93 542.82,147.93 L542.82,144.35 545.37,144.35 L545.37,140.77 547.91,140.77 L547.91,137.94 550.46,137.94 L550.46,135.42 553.00,135.42 L553.00,132.90 555.55,132.90 L555.55,130.54 558.09,130.54 L558.09,128.96 560.64,128.96 L560.64,127.38 563.18,127.38 L563.18,125.79 565.73,125.79 L565.73,124.32 568.28,124.32 L568.28,123.64 570.82,123.64 L570.82,122.97 573.37,122.97 L573.37,122.29 575.91,122.29 L575.91,121.61 578.46,121.61 L578.46,120.99 581.00,120.99 L581.00,120.86 583.55,120.86 L583.55,120.73 586.09,120.73 L586.09,120.60 588.64,120.60 L588.64,120.47 591.18,120.47 L591.18,120.34 593.73,120.34 L593.73,120.21 596.28,120.21 L596.28,120.08 598.82,120.08 L598.82,119.95 601.37,119.95 L601.37,119.82 603.91,119.82 L603.91,119.70 606.46,119.70 L606.46,119.65 609.00,119.65 L609.00,119.60 611.55,119.60 L611.55,119.55 614.09,119.55 L614.09,119.50 616.64,119.50 L616.64,119.45 619.19,119.45 L619.19,119.40 621.73,119.40 L621.73,119.35 624.28,119.35 L624.28,119.30 626.82,119.30 L626.82,119.25 629.37,119.25 L629.37,119.20 631.91,119.20 L631.91,119.15 634.46,119.15 L634.46,119.10 637.00,119.10 L637.00,119.05 639.55,119.05 L639.55,119.00 642.10,119.00 L642.10,118.95 644.64,118.95 L644.64,118.90 647.19,118.90 L647.19,118.85 649.73,118.85 L649.73,118.80 652.28,118.80 L652.28,118.76 654.82,118.76 L654.82,118.71 657.37,118.71 L657.37,118.72 659.91,118.72 L659.91,118.75 662.46,118.75 L662.46,118.77 665.00,118.77 L665.00,118.80 667.55,118.80 L667.55,118.82 670.10,118.82 L670.10,118.85 672.64,118.85 L672.64,118.87 675.19,118.87 L675.19,118.90 677.73,118.90 L677.73,118.92 680.28,118.92 L680.28,118.95 682.82,118.95 L682.82,118.97 685.37,118.97 L685.37,118.99 687.91,118.99 L687.91,119.02 690.46,119.02 L690.46,119.04 693.00,119.04 L693.00,119.07 695.55,119.07 L695.55,119.09 698.10,119.09 L698.10,119.12 700.64,119.12 L700.64,119.14 703.19,119.14 L703.19,119.17 705.73,119.17 L705.73,119.19 708.28,119.19 L708.28,119.36 710.82,119.36 L710.82,119.58 713.37,119.58 L713.37,119.81 715.91,119.81 L715.91,120.03 718.46,120.03 L718.46,120.25 721.01,120.25 L721.01,120.47 723.55,120.47 L723.55,120.69 726.10,120.69 L726.10,120.92 728.64,120.92 L728.64,121.14 731.19,121.14 L731.19,121.36 733.73,121.36 L733.73,121.58 736.28,121.58 L736.28,121.80 738.82,121.80 L738.82,122.03 741.37,122.03 L741.37,122.25 743.91,122.25 L743.91,122.47 746.46,122.47 L746.46,122.69 749.01,122.69 L749.01,122.91 751.55,122.91 L751.55,123.14 754.10,123.14 L754.10,123.36 756.64,123.36 L756.64,123.58 759.19,123.58 L759.19,123.87 761.73,123.87 L761.73,124.26 764.28,124.26 L764.28,124.64 766.82,124.64 L766.82,125.02 769.37,125.02 L769.37,125.40 771.92,125.40 L771.92,125.78 774.46,125.78 L774.46,126.17 777.01,126.17 L777.01,126.55 779.55,126.55 L779.55,126.93 782.10,126.93 L782.10,127.31 784.64,127.31 L784.64,127.69 787.19,127.69 L787.19,128.08 789.73,128.08 L789.73,128.46 792.28,128.46 L792.28,128.84 794.83,128.84 L794.83,129.22 797.37,129.22 L797.37,129.60 799.92,129.60 L799.92,129.99 802.46,129.99 L802.46,130.37 805.01,130.37 L805.01,130.75 807.55,130.75 L807.55,131.13 810.10,131.13 L810.10,131.52 812.64,131.52 L812.64,131.90 815.19,131.90 L815.19,132.28 817.73,132.28 L817.73,132.68 820.28,132.68 L820.28,133.19 822.83,133.19 L822.83,133.70 825.37,133.70 L825.37,134.21 827.92,134.21 L827.92,134.72 830.46,134.72 L830.46,135.24 833.01,135.24 L833.01,135.75 835.55,135.75 L835.55,136.26 838.10,136.26 L838.10,136.77 840.64,136.77 L840.64,137.28 843.19,137.28 L843.19,137.79 845.74,137.79 L845.74,138.30 848.28,138.30 L848.28,138.81 850.83,138.81 L850.83,139.32 853.37,139.32 L853.37,139.83 855.92,139.83 L855.92,140.34 858.46,140.34 L858.46,140.85 861.01,140.85 L861.01,141.37 863.55,141.37 L863.55,141.88 866.10,141.88 L866.10,142.39 868.64,142.39 L868.64,142.90 871.19,142.90 L871.19,143.41 873.74,143.41 L873.74,143.92 876.28,143.92 L876.28,144.43 878.83,144.43 L878.83,145.21 881.37,145.21 L881.37,146.04 883.92,146.04 L883.92,146.86 886.46,146.86 L886.46,147.68 889.01,147.68 L889.01,148.51 891.55,148.51 L891.55,149.33 894.10,149.33 L894.10,150.16 896.64,150.16 L896.64,150.98 899.19,150.98 L899.19,151.81 901.74,151.81 L901.74,152.63 904.28,152.63 L904.28,153.45 906.83,153.45 L906.83,154.28 909.37,154.28 L909.37,155.10 911.92,155.10 L911.92,155.93 914.46,155.93 L914.46,156.75 917.01,156.75 L917.01,157.57 919.55,157.57 L919.55,158.40 922.10,158.40 L922.10,159.22 924.65,159.22 L924.65,160.05 927.19,160.05 L927.19,160.87 929.74,160.87 L929.74,161.70 932.28,161.70 L932.28,162.52 934.83,162.52 L934.83,163.34 937.37,163.34 L937.37,164.42 939.92,164.42 L939.92,165.64 942.46,165.64 L942.46,166.79 945.01,166.79 L945.01,167.94 947.56,167.94 L947.56,169.09 950.10,169.09 L950.10,170.24 952.65,170.24 L952.65,171.40 955.19,171.40 L955.19,172.57 957.74,172.57 L957.74,173.73 960.28,173.73 L960.28,174.89 962.83,174.89 L962.83,176.16 965.37,176.16 L965.37,177.57 967.92,177.57 L967.92,178.98 970.46,178.98 L970.46,180.39 973.01,180.39 L973.01,181.50 975.56,181.50 L975.56,180.20 978.10,180.20 L978.10,179.20 980.65,179.20 L980.65,183.44 983.19,183.44 L983.19,184.25 985.74,184.25 L985.74,185.52 988.28,185.52 L988.28,186.78 990.83,186.78 L990.83,187.94 993.37,187.94 L993.37,188.96 995.92,188.96 L995.92,189.98 998.47,189.98 L998.47,190.10 1001.01,190.10 L1001.01,191.97 1003.56,191.97 L1003.56,192.85 1006.10,192.85 L1006.10,193.73 1008.65,193.73 L1008.65,194.61 1011.19,194.61 L1011.19,195.30 1013.74,195.30 L1013.74,192.20 1016.28,192.20 L1016.28,204.70 1018.83,204.70 L1018.83,197.90 1021.37,197.90 L1021.37,207.80 1023.92,207.80 L1023.92,213.00 1026.47,213.00 L1026.47,204.70 1029.01,204.70 L1029.01,207.80 1031.56,207.80 L1031.56,207.80 1034.10,207.80 L1034.10,204.70 1036.65,204.70 L1036.65,207.80 1039.19,207.80 L1039.19,204.70 1041.74,204.70 L1041.74,213.0 Z" fill="url(#plasma)"/><rect x="413" y="64.8" width="3" height="148.2" fill="#0d0887"/><line x1="412.5" y1="61" x2="412.5" y2="214" stroke="#3a3a3a" stroke-width="1"/><line x1="412" y1="213.3" x2="1065" y2="213.3" stroke="#4a4a4a" stroke-width="1.5"/><line x1="409" x2="413" y1="213.00" y2="213.00" stroke="#111" stroke-width="1"/><line x1="410" x2="413" y1="207.27" y2="207.27" stroke="#111" stroke-width="1"/><line x1="410" x2="413" y1="203.91" y2="203.91" stroke="#111" stroke-width="1"/><line x1="410" x2="413" y1="201.53" y2="201.53" stroke="#111" stroke-width="1"/><line x1="410" x2="413" y1="199.68" y2="199.68" stroke="#111" stroke-width="1"/><line x1="410" x2="413" y1="198.18" y2="198.18" stroke="#111" stroke-width="1"/><line x1="410" x2="413" y1="196.90" y2="196.90" stroke="#111" stroke-width="1"/><line x1="410" x2="413" y1="195.80" y2="195.80" stroke="#111" stroke-width="1"/><line x1="410" x2="413" y1="194.82" y2="194.82" stroke="#111" stroke-width="1"/><line x1="409" x2="413" y1="193.95" y2="193.95" stroke="#111" stroke-width="1"/><line x1="410" x2="413" y1="188.22" y2="188.22" stroke="#111" stroke-width="1"/><line x1="410" x2="413" y1="184.86" y2="184.86" stroke="#111" stroke-width="1"/><line x1="410" x2="413" y1="182.48" y2="182.48" stroke="#111" stroke-width="1"/><line x1="410" x2="413" y1="180.63" y2="180.63" stroke="#111" stroke-width="1"/><line x1="410" x2="413" y1="179.13" y2="179.13" stroke="#111" stroke-width="1"/><line x1="410" x2="413" y1="177.85" y2="177.85" stroke="#111" stroke-width="1"/><line x1="410" x2="413" y1="176.75" y2="176.75" stroke="#111" stroke-width="1"/><line x1="410" x2="413" y1="175.77" y2="175.77" stroke="#111" stroke-width="1"/><line x1="409" x2="413" y1="174.90" y2="174.90" stroke="#111" stroke-width="1"/><line x1="410" x2="413" y1="169.17" y2="169.17" stroke="#111" stroke-width="1"/><line x1="410" x2="413" y1="165.81" y2="165.81" stroke="#111" stroke-width="1"/><line x1="410" x2="413" y1="163.43" y2="163.43" stroke="#111" stroke-width="1"/><line x1="410" x2="413" y1="161.58" y2="161.58" stroke="#111" stroke-width="1"/><line x1="410" x2="413" y1="160.08" y2="160.08" stroke="#111" stroke-width="1"/><line x1="410" x2="413" y1="158.80" y2="158.80" stroke="#111" stroke-width="1"/><line x1="410" x2="413" y1="157.70" y2="157.70" stroke="#111" stroke-width="1"/><line x1="410" x2="413" y1="156.72" y2="156.72" stroke="#111" stroke-width="1"/><line x1="409" x2="413" y1="155.85" y2="155.85" stroke="#111" stroke-width="1"/><line x1="410" x2="413" y1="150.12" y2="150.12" stroke="#111" stroke-width="1"/><line x1="410" x2="413" y1="146.76" y2="146.76" stroke="#111" stroke-width="1"/><line x1="410" x2="413" y1="144.38" y2="144.38" stroke="#111" stroke-width="1"/><line x1="410" x2="413" y1="142.53" y2="142.53" stroke="#111" stroke-width="1"/><line x1="410" x2="413" y1="141.03" y2="141.03" stroke="#111" stroke-width="1"/><line x1="410" x2="413" y1="139.75" y2="139.75" stroke="#111" stroke-width="1"/><line x1="410" x2="413" y1="138.65" y2="138.65" stroke="#111" stroke-width="1"/><line x1="410" x2="413" y1="137.67" y2="137.67" stroke="#111" stroke-width="1"/><line x1="409" x2="413" y1="136.80" y2="136.80" stroke="#111" stroke-width="1"/><line x1="410" x2="413" y1="131.07" y2="131.07" stroke="#111" stroke-width="1"/><line x1="410" x2="413" y1="127.71" y2="127.71" stroke="#111" stroke-width="1"/><line x1="410" x2="413" y1="125.33" y2="125.33" stroke="#111" stroke-width="1"/><line x1="410" x2="413" y1="123.48" y2="123.48" stroke="#111" stroke-width="1"/><line x1="410" x2="413" y1="121.98" y2="121.98" stroke="#111" stroke-width="1"/><line x1="410" x2="413" y1="120.70" y2="120.70" stroke="#111" stroke-width="1"/><line x1="410" x2="413" y1="119.60" y2="119.60" stroke="#111" stroke-width="1"/><line x1="410" x2="413" y1="118.62" y2="118.62" stroke="#111" stroke-width="1"/><line x1="409" x2="413" y1="117.75" y2="117.75" stroke="#111" stroke-width="1"/><line x1="410" x2="413" y1="112.02" y2="112.02" stroke="#111" stroke-width="1"/><line x1="410" x2="413" y1="108.66" y2="108.66" stroke="#111" stroke-width="1"/><line x1="410" x2="413" y1="106.28" y2="106.28" stroke="#111" stroke-width="1"/><line x1="410" x2="413" y1="104.43" y2="104.43" stroke="#111" stroke-width="1"/><line x1="410" x2="413" y1="102.93" y2="102.93" stroke="#111" stroke-width="1"/><line x1="410" x2="413" y1="101.65" y2="101.65" stroke="#111" stroke-width="1"/><line x1="410" x2="413" y1="100.55" y2="100.55" stroke="#111" stroke-width="1"/><line x1="410" x2="413" y1="99.57" y2="99.57" stroke="#111" stroke-width="1"/><line x1="409" x2="413" y1="98.70" y2="98.70" stroke="#111" stroke-width="1"/><line x1="410" x2="413" y1="92.97" y2="92.97" stroke="#111" stroke-width="1"/><line x1="410" x2="413" y1="89.61" y2="89.61" stroke="#111" stroke-width="1"/><line x1="410" x2="413" y1="87.23" y2="87.23" stroke="#111" stroke-width="1"/><line x1="410" x2="413" y1="85.38" y2="85.38" stroke="#111" stroke-width="1"/><line x1="410" x2="413" y1="83.88" y2="83.88" stroke="#111" stroke-width="1"/><line x1="410" x2="413" y1="82.60" y2="82.60" stroke="#111" stroke-width="1"/><line x1="410" x2="413" y1="81.50" y2="81.50" stroke="#111" stroke-width="1"/><line x1="410" x2="413" y1="80.52" y2="80.52" stroke="#111" stroke-width="1"/><line x1="409" x2="413" y1="79.65" y2="79.65" stroke="#111" stroke-width="1"/><line x1="410" x2="413" y1="73.92" y2="73.92" stroke="#111" stroke-width="1"/><line x1="410" x2="413" y1="70.56" y2="70.56" stroke="#111" stroke-width="1"/><line x1="410" x2="413" y1="68.18" y2="68.18" stroke="#111" stroke-width="1"/><line x1="410" x2="413" y1="66.33" y2="66.33" stroke="#111" stroke-width="1"/><line x1="410" x2="413" y1="64.83" y2="64.83" stroke="#111" stroke-width="1"/><line x1="410" x2="413" y1="63.55" y2="63.55" stroke="#111" stroke-width="1"/><line x1="410" x2="413" y1="62.45" y2="62.45" stroke="#111" stroke-width="1"/><line x1="410" x2="413" y1="61.47" y2="61.47" stroke="#111" stroke-width="1"/><line x1="409" x2="413" y1="60.60" y2="60.60" stroke="#111" stroke-width="1"/><text x="409" y="196.25" font-size="6.6" text-anchor="end" font-family="Liberation Sans" fill="#333" letter-spacing="-0.3">1.0e+1</text><text x="409" y="177.20" font-size="6.6" text-anchor="end" font-family="Liberation Sans" fill="#333" letter-spacing="-0.3">1.0e+2</text><text x="409" y="158.15" font-size="6.6" text-anchor="end" font-family="Liberation Sans" fill="#333" letter-spacing="-0.3">1.0e+3</text><text x="409" y="139.10" font-size="6.6" text-anchor="end" font-family="Liberation Sans" fill="#333" letter-spacing="-0.3">1.0e+4</text><text x="409" y="120.05" font-size="6.6" text-anchor="end" font-family="Liberation Sans" fill="#333" letter-spacing="-0.3">1.0e+5</text><text x="409" y="101.00" font-size="6.6" text-anchor="end" font-family="Liberation Sans" fill="#333" letter-spacing="-0.3">1.0e+6</text><text x="409" y="81.95" font-size="6.6" text-anchor="end" font-family="Liberation Sans" fill="#333" letter-spacing="-0.3">1.0e+7</text><text x="409" y="62.90" font-size="6.6" text-anchor="end" font-family="Liberation Sans" fill="#333" letter-spacing="-0.3">1.0e+8</text><text x="409" y="215.3" font-size="6.2" text-anchor="end" font-family="Liberation Sans" fill="#222">1.0</text><line x1="413.00" x2="413.00" y1="213" y2="217" stroke="#222" stroke-width="1"/><text x="413.00" y="222.2" font-size="5.8" text-anchor="middle" font-family="Liberation Sans" fill="#333" letter-spacing="-0.2">0</text><line x1="463.91" x2="463.91" y1="213" y2="217" stroke="#222" stroke-width="1"/><text x="463.91" y="222.2" font-size="5.8" text-anchor="middle" font-family="Liberation Sans" fill="#333" letter-spacing="-0.2">20</text><line x1="514.82" x2="514.82" y1="213" y2="217" stroke="#222" stroke-width="1"/><text x="514.82" y="222.2" font-size="5.8" text-anchor="middle" font-family="Liberation Sans" fill="#333" letter-spacing="-0.2">40</text><line x1="565.73" x2="565.73" y1="213" y2="217" stroke="#222" stroke-width="1"/><text x="565.73" y="222.2" font-size="5.8" text-anchor="middle" font-family="Liberation Sans" fill="#333" letter-spacing="-0.2">60</text><line x1="616.64" x2="616.64" y1="213" y2="217" stroke="#222" stroke-width="1"/><text x="616.64" y="222.2" font-size="5.8" text-anchor="middle" font-family="Liberation Sans" fill="#333" letter-spacing="-0.2">80</text><line x1="667.55" x2="667.55" y1="213" y2="217" stroke="#222" stroke-width="1"/><text x="667.55" y="222.2" font-size="5.8" text-anchor="middle" font-family="Liberation Sans" fill="#333" letter-spacing="-0.2">100</text><line x1="718.46" x2="718.46" y1="213" y2="217" stroke="#222" stroke-width="1"/><text x="718.46" y="222.2" font-size="5.8" text-anchor="middle" font-family="Liberation Sans" fill="#333" letter-spacing="-0.2">120</text><line x1="769.37" x2="769.37" y1="213" y2="217" stroke="#222" stroke-width="1"/><text x="769.37" y="222.2" font-size="5.8" text-anchor="middle" font-family="Liberation Sans" fill="#333" letter-spacing="-0.2">140</text><line x1="820.28" x2="820.28" y1="213" y2="217" stroke="#222" stroke-width="1"/><text x="820.28" y="222.2" font-size="5.8" text-anchor="middle" font-family="Liberation Sans" fill="#333" letter-spacing="-0.2">160</text><line x1="871.19" x2="871.19" y1="213" y2="217" stroke="#222" stroke-width="1"/><text x="871.19" y="222.2" font-size="5.8" text-anchor="middle" font-family="Liberation Sans" fill="#333" letter-spacing="-0.2">180</text><line x1="922.10" x2="922.10" y1="213" y2="217" stroke="#222" stroke-width="1"/><text x="922.10" y="222.2" font-size="5.8" text-anchor="middle" font-family="Liberation Sans" fill="#333" letter-spacing="-0.2">200</text><line x1="973.01" x2="973.01" y1="213" y2="217" stroke="#222" stroke-width="1"/><text x="973.01" y="222.2" font-size="5.8" text-anchor="middle" font-family="Liberation Sans" fill="#333" letter-spacing="-0.2">220</text><line x1="1023.92" x2="1023.92" y1="213" y2="217" stroke="#222" stroke-width="1"/><text x="1023.92" y="222.2" font-size="5.8" text-anchor="middle" font-family="Liberation Sans" fill="#333" letter-spacing="-0.2">240</text><rect x="413" y="226.4" width="650" height="14" fill="url(#plasma)"/><circle cx="413.00" cy="233.5" r="4.5" fill="#84847c" fill-opacity="0.85" stroke="#55554a" stroke-width="0.8"/><path d="M409.70,235 A3.4 3.4 0 0 1 415.40,230.8" stroke="#d8d8c8" stroke-width="1.3" fill="none"/><circle cx="453.73" cy="233.5" r="4.5" fill="#84847c" fill-opacity="0.85" stroke="#55554a" stroke-width="0.8"/><path d="M450.43,235 A3.4 3.4 0 0 1 456.13,230.8" stroke="#d8d8c8" stroke-width="1.3" fill="none"/><circle cx="494.46" cy="233.5" r="4.5" fill="#84847c" fill-opacity="0.85" stroke="#55554a" stroke-width="0.8"/><path d="M491.16,235 A3.4 3.4 0 0 1 496.86,230.8" stroke="#d8d8c8" stroke-width="1.3" fill="none"/><circle cx="535.18" cy="233.5" r="4.5" fill="#84847c" fill-opacity="0.85" stroke="#55554a" stroke-width="0.8"/><path d="M531.88,235 A3.4 3.4 0 0 1 537.58,230.8" stroke="#d8d8c8" stroke-width="1.3" fill="none"/><circle cx="575.91" cy="233.5" r="4.5" fill="#84847c" fill-opacity="0.85" stroke="#55554a" stroke-width="0.8"/><path d="M572.61,235 A3.4 3.4 0 0 1 578.31,230.8" stroke="#d8d8c8" stroke-width="1.3" fill="none"/><circle cx="616.64" cy="233.5" r="4.5" fill="#84847c" fill-opacity="0.85" stroke="#55554a" stroke-width="0.8"/><path d="M613.34,235 A3.4 3.4 0 0 1 619.04,230.8" stroke="#d8d8c8" stroke-width="1.3" fill="none"/><circle cx="657.37" cy="233.5" r="4.5" fill="#84847c" fill-opacity="0.85" stroke="#55554a" stroke-width="0.8"/><path d="M654.07,235 A3.4 3.4 0 0 1 659.77,230.8" stroke="#d8d8c8" stroke-width="1.3" fill="none"/><circle cx="698.10" cy="233.5" r="4.5" fill="#84847c" fill-opacity="0.85" stroke="#55554a" stroke-width="0.8"/><path d="M694.80,235 A3.4 3.4 0 0 1 700.50,230.8" stroke="#d8d8c8" stroke-width="1.3" fill="none"/><circle cx="738.82" cy="233.5" r="4.5" fill="#84847c" fill-opacity="0.85" stroke="#55554a" stroke-width="0.8"/><path d="M735.52,235 A3.4 3.4 0 0 1 741.22,230.8" stroke="#d8d8c8" stroke-width="1.3" fill="none"/><circle cx="779.55" cy="233.5" r="4.5" fill="#84847c" fill-opacity="0.85" stroke="#55554a" stroke-width="0.8"/><path d="M776.25,235 A3.4 3.4 0 0 1 781.95,230.8" stroke="#d8d8c8" stroke-width="1.3" fill="none"/><circle cx="820.28" cy="233.5" r="4.5" fill="#84847c" fill-opacity="0.85" stroke="#55554a" stroke-width="0.8"/><path d="M816.98,235 A3.4 3.4 0 0 1 822.68,230.8" stroke="#d8d8c8" stroke-width="1.3" fill="none"/><circle cx="861.01" cy="233.5" r="4.5" fill="#84847c" fill-opacity="0.85" stroke="#55554a" stroke-width="0.8"/><path d="M857.71,235 A3.4 3.4 0 0 1 863.41,230.8" stroke="#d8d8c8" stroke-width="1.3" fill="none"/><circle cx="901.74" cy="233.5" r="4.5" fill="#84847c" fill-opacity="0.85" stroke="#55554a" stroke-width="0.8"/><path d="M898.44,235 A3.4 3.4 0 0 1 904.14,230.8" stroke="#d8d8c8" stroke-width="1.3" fill="none"/><circle cx="942.46" cy="233.5" r="4.5" fill="#84847c" fill-opacity="0.85" stroke="#55554a" stroke-width="0.8"/><path d="M939.16,235 A3.4 3.4 0 0 1 944.86,230.8" stroke="#d8d8c8" stroke-width="1.3" fill="none"/><circle cx="983.19" cy="233.5" r="4.5" fill="#84847c" fill-opacity="0.85" stroke="#55554a" stroke-width="0.8"/><path d="M979.89,235 A3.4 3.4 0 0 1 985.59,230.8" stroke="#d8d8c8" stroke-width="1.3" fill="none"/><circle cx="1023.92" cy="233.5" r="4.5" fill="#84847c" fill-opacity="0.85" stroke="#55554a" stroke-width="0.8"/><path d="M1020.62,235 A3.4 3.4 0 0 1 1026.32,230.8" stroke="#d8d8c8" stroke-width="1.3" fill="none"/><circle cx="1062.30" cy="233.5" r="4.5" fill="#84847c" fill-opacity="0.85" stroke="#55554a" stroke-width="0.8"/><path d="M1059.00,235 A3.4 3.4 0 0 1 1064.70,230.8" stroke="#d8d8c8" stroke-width="1.3" fill="none"/><line x1="413" y1="213" x2="1062" y2="61" stroke="#3a3a3a" stroke-width="1.6"/><circle cx="413" cy="213" r="4.4" fill="#8a8aa8" stroke="#000" stroke-width="2.2"/><path d="M410.5 213 H415.5 M413 210.5 V215.5" stroke="#d0d0d8" stroke-width="0.8"/><circle cx="1062" cy="61" r="4.6" fill="#8a8f94" stroke="#151515" stroke-width="1.6"/></svg>
<div class="a" style="left:1074.8px;top:86px;width:17px;height:16px;background:linear-gradient(#f7f6f4,#e6e3df);border:1px solid #b8b4ad;border-radius:2.5px"></div>
<div class="a" style="left:1074.8px;top:107.2px;width:17px;height:16px;background:linear-gradient(#f7f6f4,#e6e3df);border:1px solid #b8b4ad;border-radius:2.5px"></div>
<div class="a" style="left:1074.8px;top:128px;width:17px;height:16px;background:linear-gradient(#f7f6f4,#e6e3df);border:1px solid #b8b4ad;border-radius:2.5px"></div>
<div class="a" style="left:1074.8px;top:148.5px;width:17px;height:16px;background:linear-gradient(#f7f6f4,#e6e3df);border:1px solid #b8b4ad;border-radius:2.5px"></div>
<div class="a" style="left:1074.8px;top:169.3px;width:17px;height:16px;background:linear-gradient(#f7f6f4,#e6e3df);border:1px solid #b8b4ad;border-radius:2.5px"></div>
<div class="a" style="left:1074.8px;top:189.8px;width:17px;height:16px;background:linear-gradient(#f7f6f4,#e6e3df);border:1px solid #b8b4ad;border-radius:2.5px"></div>
<svg style="left:1076.3px;top:87.5px" width="14" height="13" viewBox="0 0 14 13"><path d="M2 4 H12 M2 9 H12 M2 7.5 V10.5 M5 7.5 V10.5 M9 7.5 V10.5 M12 7.5 V10.5" stroke="#777" stroke-width="0.8"/><path d="M1.5 4 L4.5 1.8 L4.5 6.2 Z M12.5 4 L9.5 1.8 L9.5 6.2 Z" fill="#8cc96f"/></svg>
<svg style="left:1076.3px;top:108.7px" width="14" height="13" viewBox="0 0 14 13"><path d="M2 9 H12 M2 7.5 V10.5 M5 7.5 V10.5 M9 7.5 V10.5 M12 7.5 V10.5" stroke="#777" stroke-width="0.8"/><path d="M5 4 L2 1.8 L2 6.2 Z M9 4 L12 1.8 L12 6.2 Z" fill="#e0b000"/><path d="M6.3 2.5 Q5.5 4 6.3 5.5 M7.7 2.5 Q8.5 4 7.7 5.5" stroke="#555" stroke-width="0.6" fill="none"/></svg>
<svg style="left:1076.3px;top:129.5px" width="14" height="13" viewBox="0 0 14 13"><defs><linearGradient id="sq" x1="0" y1="0" x2="1" y2="1"><stop offset="0" stop-color="#222"/><stop offset="0.6" stop-color="#aaa"/><stop offset="1" stop-color="#eee"/></linearGradient></defs><rect x="1.5" y="0.8" width="11" height="11" fill="url(#sq)"/><circle cx="7.3" cy="6.4" r="5" fill="#fafafa" stroke="#777" stroke-width="0.6"/></svg>
<svg style="left:1076.3px;top:150.0px" width="14" height="13" viewBox="0 0 14 13"><path d="M1.5 3 H6 L7 4 H12 V10 H1.5 Z" fill="#e8d890" stroke="#a89858" stroke-width="0.6"/><path d="M7 12 L3 8 Q2 5.5 4.5 5.5 Q6 5.5 7 7 Q8 5.5 9.5 5.5 Q12 5.5 11 8 Z" fill="#e02828"/></svg>
<svg style="left:1076.3px;top:170.8px" width="14" height="13" viewBox="0 0 14 13"><path d="M1.5 4 H6 L7 5 H11 V11 H1.5 Z" fill="#e8d890" stroke="#a89858" stroke-width="0.6"/><path d="M1.5 11 L3.5 7 H13 L11 11 Z" fill="#f0e0a0" stroke="#a89858" stroke-width="0.6"/><path d="M9 0.5 L11.5 3.5 H10 V6 H8 V3.5 H6.5 Z" fill="#4caf50"/></svg>
<svg style="left:1076.3px;top:191.3px" width="14" height="13" viewBox="0 0 14 13"><defs><linearGradient id="rb" x1="0" y1="0" x2="0" y2="1"><stop offset="0" stop-color="#e02020"/><stop offset="0.3" stop-color="#f0c000"/><stop offset="0.6" stop-color="#30b030"/><stop offset="1" stop-color="#2040e0"/></linearGradient></defs><rect x="5" y="1" width="4.5" height="11" fill="url(#rb)" stroke="#777" stroke-width="0.5"/></svg>
<div class="a" style="left:732.5px;top:254px;width:1px;height:1px;background:#b8b4ae"></div>
<div class="a" style="left:734.5px;top:254px;width:1px;height:1px;background:#b8b4ae"></div>
<div class="a" style="left:736.5px;top:254px;width:1px;height:1px;background:#b8b4ae"></div>
<div class="a" style="left:738.5px;top:254px;width:1px;height:1px;background:#b8b4ae"></div>
<div class="a" style="left:740.5px;top:254px;width:1px;height:1px;background:#b8b4ae"></div>
<div class="a" style="left:742.5px;top:254px;width:1px;height:1px;background:#b8b4ae"></div>
<div class="a" style="left:373px;top:361.5px;width:1px;height:1px;background:#c4c0ba"></div>
<div class="a" style="left:373px;top:363.5px;width:1px;height:1px;background:#c4c0ba"></div>
<div class="a" style="left:373px;top:365.5px;width:1px;height:1px;background:#c4c0ba"></div>
<div class="a" style="left:373px;top:367.5px;width:1px;height:1px;background:#c4c0ba"></div>
<div class="a" style="left:373px;top:369.5px;width:1px;height:1px;background:#c4c0ba"></div>
<div class="a" style="left:373px;top:371.5px;width:1px;height:1px;background:#c4c0ba"></div>
<div class="a" style="left:371px;top:56px;width:1px;height:252px;background:transparent"></div>
<div class="a" style="left:375.5px;top:256.3px;width:723px;height:432px;border:1px solid #c9c5bf;background:#ece9e5"></div>
<svg style="left:378px;top:258px" width="60" height="12" viewBox="0 0 60 12"><g><rect x="3" y="1" width="7" height="6" fill="#9a9a90"/><path d="M1 10 Q1 5 6 6" stroke="#e04020" stroke-width="2" fill="none"/><path d="M5 4 L8 6 L5 8 Z" fill="#e04020"/></g><g opacity="0.55"><rect x="17" y="1" width="7" height="7" fill="#9a9a90"/><path d="M19 5 L24 11" stroke="#888" stroke-width="2"/></g><text x="30.5" y="9" font-size="8" font-family="Liberation Sans" fill="#2a2a2a">3D</text><rect x="44" y="1" width="9" height="9" fill="#c8c8b8" stroke="#777" stroke-width="0.7"/><path d="M48.5 1 V10 M44 5.5 H53" stroke="#777" stroke-width="0.6"/><circle cx="51" cy="8.5" r="3" fill="#4cc040"/></svg>
<div class="a t" style="left:962.8px;top:258.5px;color:#101010;font-size:10.7px"><b>RenderView1</b></div>
<div class="a" style="left:962.8px;top:270px;width:67px;height:1px;background:#101010"></div>
<div class="a" style="left:1038.6px;top:258px;width:13px;height:12.5px;background:linear-gradient(#f8f7f5,#e8e5e1);border:1px solid #cbc7c0;border-radius:2px"></div>
<div class="a" style="left:1053.5px;top:258px;width:13px;height:12.5px;background:linear-gradient(#f8f7f5,#e8e5e1);border:1px solid #cbc7c0;border-radius:2px"></div>
<div class="a" style="left:1068.5px;top:258px;width:13px;height:12.5px;background:linear-gradient(#f8f7f5,#e8e5e1);border:1px solid #cbc7c0;border-radius:2px"></div>
<div class="a" style="left:1083.7px;top:258px;width:13px;height:12.5px;background:linear-gradient(#f8f7f5,#e8e5e1);border:1px solid #cbc7c0;border-radius:2px"></div>
<svg style="left:1040px;top:259px" width="58" height="11" viewBox="0 0 58 11"><rect x="1.5" y="2" width="6" height="6" fill="#fff" stroke="#222" stroke-width="1.1" rx="0.6"/><path d="M4.5 2 V8" stroke="#222" stroke-width="1"/><rect x="16.5" y="2" width="6" height="6" fill="#fff" stroke="#222" stroke-width="1.1" rx="0.6"/><path d="M16.5 5 H22.5" stroke="#222" stroke-width="1"/><rect x="31.5" y="2" width="6" height="6" fill="#fff" stroke="#111" stroke-width="1.3"/><rect x="46.5" y="1.8" width="6.5" height="6.8" fill="#f4f4f2" stroke="#999" stroke-width="0.8" rx="1"/><path d="M48 3.3 L51.5 7 M51.5 3.3 L48 7" stroke="#666" stroke-width="0.8"/></svg>
<div class="a" style="left:377px;top:273px;width:721px;height:414.8px;border:2px solid #0000ff;background:#52576e"></div>
<div class="a" style="left:379px;top:685px;width:717px;height:0.8px;background:#b8b8a0"></div>
<div class="a" style="left:1095.2px;top:275px;width:0.8px;height:410.8px;background:#b8b8a0"></div>
<div class="a" style="left:1095px;top:695px;width:1px;height:1px;background:#c8c4be"></div>
<div class="a" style="left:1092px;top:698px;width:1px;height:1px;background:#c8c4be"></div>
<div class="a" style="left:1095px;top:698px;width:1px;height:1px;background:#c8c4be"></div>
<div class="a" style="left:1089px;top:701px;width:1px;height:1px;background:#c8c4be"></div>
<div class="a" style="left:1092px;top:701px;width:1px;height:1px;background:#c8c4be"></div>
<div class="a" style="left:1095px;top:701px;width:1px;height:1px;background:#c8c4be"></div>
<svg style="left:379px;top:275px" width="717" height="410" viewBox="379 275 717 410"><defs><filter id="tex" x="0" y="0" width="1" height="1"><feTurbulence type="fractalNoise" baseFrequency="0.4" numOctaves="3" seed="3" result="n"/><feColorMatrix in="n" type="matrix" values="0 0 0 0 0  0 0 0 0 0  0 0 0 0 0  0 0 0 -1.6 1.25" result="m"/><feComposite in="SourceGraphic" in2="m" operator="in" result="c"/><feMerge><feMergeNode in="c"/></feMerge></filter><linearGradient id="blobg" x1="0" y1="0" x2="1" y2="0"><stop offset="0" stop-color="#b8408e"/><stop offset="0.3" stop-color="#a82aa2"/><stop offset="1" stop-color="#a424b0"/></linearGradient><clipPath id="blobclip"><path id="blobp" d="M669.5,449.7 L671,449.7 L671,479 L679.3,472.6 L692.5,465.2 L708.9,459.5 L720,456.2 L742,443 L759.7,429.7 L771.9,414.3 L770.8,411 L778.5,402.1 L786.2,403.2 L795,409.9 L798.4,418.7 L797.3,429.7 L792.8,440.8 L792.8,449.6 L799.5,460.6 L803.9,471.7 L802.8,484.9 L797.3,496 L790.6,507 L784,518 L770.8,526.9 L753.1,533.5 L733.2,536.8 L720,538.3 L689,539.8 L671,538.2 L659.7,528.4 L649.8,518.5 L645.7,500.5 L646.6,484 L649.8,466 L658,454.6 Z"/></clipPath><filter id="rough" x="-5%" y="-5%" width="110%" height="110%"><feTurbulence type="turbulence" baseFrequency="0.45" numOctaves="2" seed="7" result="t"/><feDisplacementMap in="SourceGraphic" in2="t" scale="3.2" xChannelSelector="R" yChannelSelector="G"/></filter></defs><path d="M595,370 L782.2,378.3 L902.2,359.6 M782.2,378.3 L781.7,569.3 M595.5,583 L781.7,569.3 L898.8,605.3" stroke="#d4d4d4" stroke-width="1" fill="none"/><path d="M772,366.5 L832.3,356.9 L831,611.7 L770.8,591.6 Z" fill="#1c1d2a" fill-opacity="0.45"/><path d="M671,361 L772,366.5 L772,591.6 L671,598.5 Z" fill="#0b0a84"/><path d="M782.2,378.3 L781.7,569.3" stroke="#d4d4d4" stroke-width="0.9" opacity="0.7"/><g filter="url(#rough)"><path d="M669.5,449.7 L671,449.7 L671,479 L679.3,472.6 L692.5,465.2 L708.9,459.5 L720,456.2 L742,443 L759.7,429.7 L771.9,414.3 L770.8,411 L778.5,402.1 L786.2,403.2 L795,409.9 L798.4,418.7 L797.3,429.7 L792.8,440.8 L792.8,449.6 L799.5,460.6 L803.9,471.7 L802.8,484.9 L797.3,496 L790.6,507 L784,518 L770.8,526.9 L753.1,533.5 L733.2,536.8 L720,538.3 L689,539.8 L671,538.2 L659.7,528.4 L649.8,518.5 L645.7,500.5 L646.6,484 L649.8,466 L658,454.6 Z" fill="url(#blobg)"/><g clip-path="url(#blobclip)"><rect x="640" y="395" width="170" height="150" fill="#3a0870" filter="url(#tex)" opacity="0.42"/><rect x="640" y="440" width="80" height="105" fill="#d050b0" opacity="0.22"/><path d="M652,466 Q647,490 651,516" stroke="#f09050" stroke-width="4" fill="none" opacity="0.5"/><path d="M656,459 L668,489" stroke="#f09850" stroke-width="2.5" fill="none" opacity="0.5"/><path d="M667,481 Q673,495 671,510" stroke="#ffa858" stroke-width="4" fill="none" opacity="0.6"/><path d="M676,486 Q686,474 697,470" stroke="#f08850" stroke-width="3" fill="none" opacity="0.35"/><path d="M671,532 Q677,521 686,518" stroke="#f09050" stroke-width="2.5" fill="none" opacity="0.45"/><path d="M700,462 Q740,465 790,478" stroke="#6a18c0" stroke-width="2.5" fill="none" opacity="0.35"/><path d="M802,470 Q795,505 770,527" stroke="#7a28d0" stroke-width="3" fill="none" opacity="0.35"/><path d="M673,507 L679,504 L684,508 L689,504 L700,507 L696,512 L687,514 L680,520 L674,522 Z" fill="#120a52"/></g></g><path d="M634.7,371 L720.2,348.2 L720,623.5 L634.7,579 Z M671,361 L720.1,363.7 L720.1,595.2 L671,598.5 Z" fill-rule="evenodd" fill="#1a1b28" fill-opacity="0.42"/><path d="M671,361 L720.1,363.7 L720.1,595.2 L671,598.5 Z" fill="#000008" fill-opacity="0.4"/><path d="M595,370 L670,344.4 L902.2,359.6 L898.8,605.3 L669.5,629.2 L595.5,583 Z M670,344.4 L669.5,629.2" stroke="#d4d4d4" stroke-width="1.1" fill="none"/><path d="M626,481.2 L671,481.2" stroke="#e8e8e0" stroke-width="2"/><path d="M619,477.2 L619,485.2 L628,481.2 Z" fill="#b8b8a8"/><circle cx="671.6" cy="481.2" r="3.8" fill="#e4e4dc"/><path d="M801,479 L811,479" stroke="#d8d8d0" stroke-width="1.5"/><path d="M817,474.8 L817,482.8 L809,478.8 Z" fill="#c8c8b8"/><path d="M430.7,633.8 V610" stroke="#c8c040" stroke-width="1.5"/><path d="M430.7,605.5 L428,611.5 L433.4,611.5 Z" fill="#f0e000"/><path d="M430.7,633.6 H449" stroke="#d02020" stroke-width="1.5"/><path d="M454.5,633.6 L447.5,631 L447.5,636.2 Z" fill="#c00000"/><path d="M430.7,634.5 H440" stroke="#20c020" stroke-width="1"/><circle cx="441" cy="635" r="2.6" fill="#00b000"/><text x="432.5" y="611.5" font-size="7.5" font-family="Liberation Sans" fill="#ddd">Y</text><text x="443" y="633.5" font-size="7" font-family="Liberation Sans" fill="#ddd">Z</text><text x="450.5" y="633.5" font-size="7" font-family="Liberation Sans" fill="#ddd">X</text></svg>
<svg style="left:0px;top:0px" width="1" height="1" viewBox="0 0 1 1"><path d="M309.5,163.8 L309.5,175 L312,172.6 L314,176.6 L315.6,175.8 L313.8,171.9 L317,171.8 Z" fill="#fff" stroke="#000" stroke-width="1.1" stroke-linejoin="miter"/></svg>
</body></html>
